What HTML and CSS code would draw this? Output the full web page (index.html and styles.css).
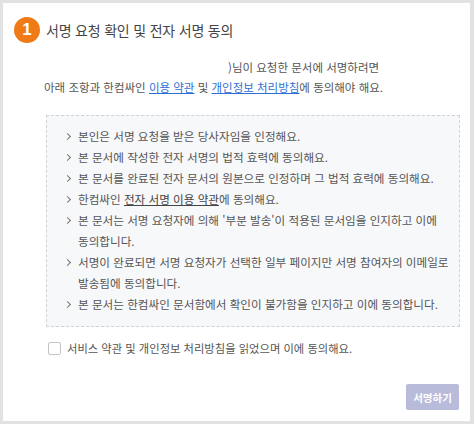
FILE: index.html
```html
<!DOCTYPE html>
<html lang="ko">
<head>
<meta charset="utf-8">
<link rel="stylesheet" href="styles.css">
</head>
<body>
<div class="card">
  <div class="title-row">
    <span class="step">1</span>
    <h1 class="title">서명 요청 확인 및 전자 서명 동의</h1>
  </div>
  <div class="intro">
    <p class="intro-line first"><span class="name"></span>)님이 요청한 문서에 서명하려면</p>
    <p class="intro-line">아래 조항과 한컴싸인 <a class="link">이용 약관</a> 및 <a class="link">개인정보 처리방침</a>에 동의해야 해요.</p>
  </div>
  <ul class="terms">
    <li>본인은 서명 요청을 받은 당사자임을 인정해요.</li>
    <li>본 문서에 작성한 전자 서명의 법적 효력에 동의해요.</li>
    <li>본 문서를 완료된 전자 문서의 원본으로 인정하며 그 법적 효력에 동의해요.</li>
    <li>한컴싸인 <span class="under">전자 서명 이용 약관</span>에 동의해요.</li>
    <li>본 문서는 서명 요청자에 의해 '부분 발송'이 적용된 문서임을 인지하고 이에 동의합니다.</li>
    <li>서명이 완료되면 서명 요청자가 선택한 일부 페이지만 서명 참여자의 이메일로 발송됨에 동의합니다.</li>
    <li>본 문서는 한컴싸인 문서함에서 확인이 불가함을 인지하고 이에 동의합니다.</li>
  </ul>
  <label class="agree">
    <span class="box"></span>
    <span>서비스 약관 및 개인정보 처리방침을 읽었으며 이에 동의해요.</span>
  </label>
  <div class="actions">
    <button class="btn" type="button">서명하기</button>
  </div>
</div>
</body>
</html>
```

FILE: styles.css
```css
* { box-sizing: border-box; }
html, body {
  margin: 0;
  padding: 0;
}
body {
  width: 474px;
  height: 424px;
  background: #e2e2e2;
  padding: 3px 4px 3px 3px;
  font-family: "Noto Sans CJK KR", "Noto Sans", sans-serif;
  color: #555;
  word-break: keep-all;
}
.card {
  background: #fff;
  height: 418px;
  padding: 14px 11px 0 11px;
  display: flex;
  flex-direction: column;
}
.title-row {
  display: flex;
  align-items: center;
  gap: 6px;
  height: 26px;
}
.step {
  width: 26px;
  height: 26px;
  border-radius: 50%;
  background: #f07a16;
  color: #fff;
  font-family: "Liberation Sans", Arial, sans-serif;
  font-weight: bold;
  font-size: 17px;
  display: flex;
  align-items: center;
  justify-content: center;
}
.title {
  margin: 0;
  font-size: 14px;
  font-weight: normal;
  color: #444;
  letter-spacing: -0.2px;
}
.intro {
  margin-top: 14px;
  padding-left: 30px;
  font-size: 11.5px;
  line-height: 20px;
}
.intro-line { margin: 0; }
.intro-line.first { padding-left: 184px; }
.link {
  color: #2f6fd6;
  text-decoration: underline;
}
.terms {
  list-style: none;
  margin: 18px 0 0 32px;
  width: 414px;
  padding: 10px 6px 11px 17px;
  background: #f7f8fa;
  border: 1px dashed #cfd2d8;
  font-size: 11.6px;
  line-height: 21px;
}
.terms li {
  position: relative;
  padding-left: 14px;
}
.terms li::before {
  content: "";
  position: absolute;
  left: 1px;
  top: 8px;
  width: 4px;
  height: 4px;
  border-right: 1.3px solid #777;
  border-bottom: 1.3px solid #777;
  transform: rotate(-45deg);
}
.under {
  text-decoration: underline;
  color: #444;
}
.agree {
  display: flex;
  align-items: center;
  gap: 6px;
  margin: 13px 0 0 34px;
  font-size: 11.3px;
  color: #555;
}
.box {
  width: 13px;
  height: 13px;
  border: 1px solid #c4c4c4;
  border-radius: 2px;
  background: #fff;
}
.actions {
  display: flex;
  justify-content: flex-end;
  margin-top: 28px;
  padding-right: 0;
}
.btn {
  width: 53px;
  height: 26px;
  border: none;
  border-radius: 2px;
  background: #b9bbdb;
  color: #fff;
  font-family: "Noto Sans CJK KR", sans-serif;
  font-weight: bold;
  font-size: 10.5px;
  padding: 0;
}
```
